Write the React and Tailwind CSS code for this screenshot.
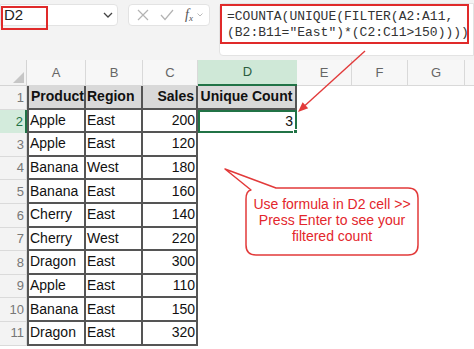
import React from 'react'

const rows = [
  ['Apple', 'East', '200'],
  ['Apple', 'East', '120'],
  ['Banana', 'West', '180'],
  ['Banana', 'East', '160'],
  ['Cherry', 'East', '140'],
  ['Cherry', 'West', '220'],
  ['Dragon', 'East', '300'],
  ['Apple', 'East', '110'],
  ['Banana', 'East', '150'],
  ['Dragon', 'East', '320'],
]

const Toolbar = () => {
  return (
    <div className='h-[60px] bg-[#f3f3f3] flex items-start pt-[3px]'>
      {/* name box */}
      <div className='relative mt-[1px] w-[118px] h-[22px] bg-white border border-[#e3e3e3] rounded-r-[4px] flex items-center justify-between'>
        <span className='pl-[3px] text-[15px] text-[#222]'>D2</span>
        <svg width='10' height='6' viewBox='0 0 10 6' className='mr-[4px]'>
          <path d='M1 1 L5 5 L9 1' fill='none' stroke='#444' strokeWidth='1.3' />
        </svg>
        <div className='absolute left-0 top-[1px] w-[47px] h-[24px] border-2 border-[#e02a2a]' />
      </div>

      {/* cancel / enter / fx */}
      <div className='ml-[10px] mt-[1px] w-[82px] h-[22px] bg-white border border-[#e3e3e3] rounded-[4px] flex items-center pl-[8px]'>
        <svg width='12' height='12' viewBox='0 0 12 12'>
          <path d='M1 1 L11 11 M11 1 L1 11' stroke='#b3b3b3' strokeWidth='1.2' />
        </svg>
        <svg width='14' height='12' viewBox='0 0 14 12' className='ml-[11px]'>
          <path d='M1 6 L5 10.5 L13 1' fill='none' stroke='#b3b3b3' strokeWidth='1.2' />
        </svg>
        <span className='ml-[11px] font-["Liberation_Serif",serif] italic text-[14px] text-[#555] leading-none'>
          f<sub className='text-[9px]'>x</sub>
        </span>
        <svg width='6' height='4' viewBox='0 0 6 4' className='ml-[4px]'>
          <path d='M0.5 0.5 L3 3 L5.5 0.5' fill='none' stroke='#bbb' strokeWidth='1' />
        </svg>
      </div>

      {/* formula bar */}
      <div className='ml-[9px] flex-1 h-[53px] bg-white border border-[#e3e3e3] rounded-l-[4px]'>
        <div className='w-[249px] h-[40px] border-2 border-[#e02a2a] overflow-hidden pl-[5px] pt-[3px] font-["Liberation_Mono",monospace] text-[13px] leading-[16px] text-[#333] whitespace-nowrap'>
          <div>=COUNTA(UNIQUE(FILTER(A2:A11,</div>
          <div>(B2:B11="East")*(C2:C11&gt;150))))</div>
        </div>
      </div>
    </div>
  )
}

const Sheet = () => {
  const letters = ['A', 'B', 'C', 'D', 'E', 'F', 'G']
  const tbl = 'border-r-2 border-b-2 border-[#555]'

  return (
    <div className='grid grid-cols-[27px_59px_57px_55px_99px_55px_56px_57px_9px] grid-rows-[26px_repeat(11,23.6px)] text-[14px] text-[#111]'>
      {/* column headers */}
      <div className='relative bg-[#f3f3f3] border-r border-b border-[#d4d4d4]'>
        <div className='absolute right-[2px] bottom-[2px] w-0 h-0 border-l-[11px] border-l-transparent border-b-[11px] border-b-[#c6c6c6]' />
      </div>
      {letters.map((l) => (
        <div
          key={l}
          className={
            l === 'D'
              ? 'bg-[#cfe8d7] border-b-2 border-[#217346] flex items-end justify-center pb-[3px] text-[13px] text-[#2b5d3e]'
              : 'bg-[#f7f7f7] border-r border-b border-[#d9d9d9] flex items-end justify-center pb-[3px] text-[13px] text-[#666]'
          }
        >
          {l}
        </div>
      ))}
      <div className='bg-[#f7f7f7] border-b border-[#d9d9d9]' />

      {/* row 1 : table header */}
      <div className='bg-[#f3f3f3] border-r border-b border-[#dadada] flex items-center justify-end pr-[2px] text-[13px] text-[#777]'>1</div>
      <div className={`${tbl} border-l-2 bg-[#d9d9d9] flex items-center pl-[2px] font-bold`}>Product</div>
      <div className={`${tbl} bg-[#d9d9d9] flex items-center pl-[1px] font-bold`}>Region</div>
      <div className={`${tbl} bg-[#d9d9d9] flex items-center justify-end pr-[2px] font-bold`}>Sales</div>
      <div className={`${tbl} bg-[#d9d9d9] flex items-center justify-center font-bold`}>Unique Count</div>
      <div />
      <div />
      <div />
      <div />

      {rows.map((r, i) => {
        const n = i + 2
        const sel = n === 2
        return (
          <React.Fragment key={n}>
            <div
              className={
                sel
                  ? 'bg-[#d3ebdc] border-r-2 border-[#217346] flex items-center justify-end pr-[2px] text-[13px] text-[#217346]'
                  : 'bg-[#f3f3f3] border-r border-b border-[#dadada] flex items-center justify-end pr-[2px] text-[13px] text-[#777]'
              }
            >
              {n}
            </div>
            <div className={`${tbl} border-l-2 bg-white flex items-center pl-[1px]`}>{r[0]}</div>
            <div className={`${tbl} bg-white flex items-center pl-[1px]`}>{r[1]}</div>
            <div className={`${tbl} bg-white flex items-center justify-end pr-[1px]`}>{r[2]}</div>
            {sel ? (
              <div className='relative border-2 border-[#217346] bg-white flex items-center justify-end pr-[2px]'>
                3
                <div className='absolute -right-[3px] -bottom-[3px] w-[5px] h-[5px] bg-[#217346] border border-white' />
              </div>
            ) : (
              <div />
            )}
            <div />
            <div />
            <div />
            <div />
          </React.Fragment>
        )
      })}
    </div>
  )
}

const Callout = () => {
  return (
    <>
      <svg className='absolute inset-0 pointer-events-none' width='474' height='349'>
        {/* arrow from formula bar to D2 */}
        <line x1='365' y1='51' x2='305' y2='105.5' stroke='#e23a3a' strokeWidth='1.4' />
        <polygon points='298,112 308.2,108.2 302.6,102.2' fill='#e23a3a' />

        {/* speech bubble */}
        <path
          d='M276 188 L408 188 Q418 188 418 198 L418 245 Q418 255 408 255 L256 255 Q246 255 246 245 L246 199 Q246 191 251 190 L225 169 Z'
          fill='white'
          stroke='#e23a3a'
          strokeWidth='1.5'
          strokeLinejoin='round'
        />
      </svg>
      <div className='absolute left-[246px] top-[196px] w-[172px] text-center text-[14px] leading-[16px] text-[#e3262c]'>
        <div>Use formula in D2 cell &gt;&gt;</div>
        <div>Press Enter to see your</div>
        <div>filtered count</div>
      </div>
    </>
  )
}

export default function App() {
  return (
    <div className='relative w-[474px] h-[349px] overflow-hidden bg-white font-["Liberation_Sans",Arial,sans-serif]'>
      <Toolbar />
      <Sheet />
      <Callout />
    </div>
  )
}
